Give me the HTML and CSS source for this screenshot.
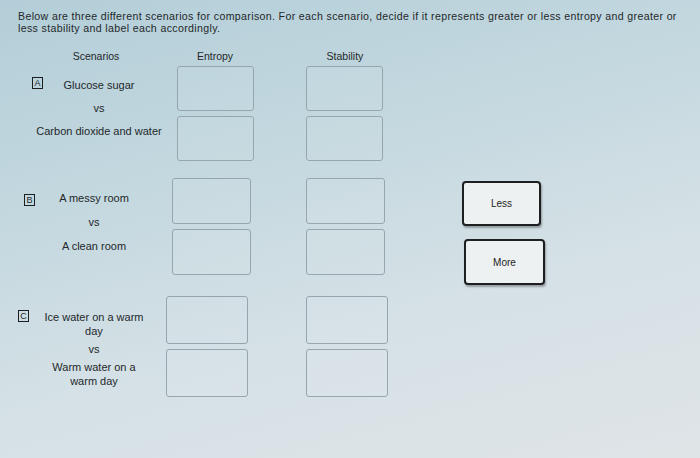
FILE: index.html
```html
<!DOCTYPE html>
<html lang="en">
<head>
    <meta charset="UTF-8">
    <meta name="viewport" content="width=device-width, initial-scale=1.0">
    <title>Entropy and Stability</title>
    <link rel="stylesheet" href="styles.css">
</head>
<body>

    <div class="sheet">
        <p class="intro">Below are three different scenarios for comparison. For each scenario, decide if it represents greater or less entropy and greater or less stability and label each accordingly.</p>

        <div class="board">
            <!-- Column headings -->
            <div class="row head-row">
                <div class="head head-scenario">Scenarios</div>
                <div class="head">Entropy</div>
                <div class="head">Stability</div>
                <div></div>
            </div>

            <!-- Scenario A -->
            <div class="row group group-a">
                <div class="scenario">
                    <span class="tag">A</span>
                    <div>Glucose sugar</div>
                    <div>vs</div>
                    <div>Carbon dioxide and water</div>
                </div>
                <div class="slots entropy"><div class="slot"></div><div class="slot"></div></div>
                <div class="slots"><div class="slot"></div><div class="slot"></div></div>
                <div></div>
            </div>

            <!-- Scenario B -->
            <div class="row group group-b">
                <div class="scenario">
                    <span class="tag">B</span>
                    <div>A messy room</div>
                    <div>vs</div>
                    <div>A clean room</div>
                </div>
                <div class="slots entropy"><div class="slot"></div><div class="slot"></div></div>
                <div class="slots"><div class="slot"></div><div class="slot"></div></div>
                <div class="options">
                    <button class="choice">Less</button>
                    <button class="choice choice-more">More</button>
                </div>
            </div>

            <!-- Scenario C -->
            <div class="row group group-c">
                <div class="scenario">
                    <span class="tag">C</span>
                    <div>Ice water on a warm<br>day</div>
                    <div>vs</div>
                    <div>Warm water on a<br>warm day</div>
                </div>
                <div class="slots entropy"><div class="slot"></div><div class="slot"></div></div>
                <div class="slots"><div class="slot"></div><div class="slot"></div></div>
                <div></div>
            </div>
        </div>
    </div>

</body>
</html>
```

FILE: styles.css
```css
html, body {
    height: 100%;
}
body {
    font-family: "Liberation Sans", Arial, sans-serif;
    margin: 0;
    color: #23282b;
    background: linear-gradient(165deg, #b3ced8 0%, #c4d8df 35%, #d5e1e6 65%, #dfe4e7 100%);
}
.sheet {
    padding: 10px 0 0 18px;
}
.intro {
    margin: 0;
    max-width: 680px;
    font-size: 10.6px;
    line-height: 12px;
    letter-spacing: 0.35px;
}
.board {
    display: flex;
    flex-direction: column;
    margin-top: 16px;
}
.row {
    display: grid;
    grid-template-columns: 158px 130px 155px 90px;
}
.head {
    width: 78px;
    text-align: center;
    font-size: 10.5px;
    line-height: 12px;
}
.head-scenario {
    width: 156px;
}
.head-row {
    margin-bottom: 4px;
}

/* each group drifts a little, like the photo */
.group {
    --shift: 0px;
    --slot-w: 77px;
    --slot-h: 45px;
}
.group-a {
    --shift: 1px;
}
.group-b {
    margin-top: 17px;
    --shift: -4px;
    --slot-w: 79px;
    --slot-h: 46px;
}
.group-c {
    margin-top: 11px;
    --shift: -10px;
    --slot-w: 82px;
    --slot-h: 48px;
}

.scenario {
    position: relative;
    width: 152px;
    display: flex;
    flex-direction: column;
    align-items: center;
    text-align: center;
    font-size: 11px;
    line-height: 12px;
    padding-top: 13px;
    gap: 11px;
}
.group-a .scenario {
    width: 162px;
}
.group-b .scenario {
    padding-top: 14px;
    gap: 12px;
}
.group-c .scenario {
    line-height: 14px;
    padding-top: 14px;
    gap: 4px;
}
.tag {
    position: absolute;
    left: 14px;
    top: 11px;
    width: 9px;
    height: 10px;
    border: 1px solid #1c1f21;
    font-size: 9px;
    line-height: 10px;
    text-align: center;
}
.group-b .tag {
    left: 6px;
    top: 16px;
}
.group-c .tag {
    left: 0;
    top: 14px;
}

.slots {
    display: flex;
    flex-direction: column;
    gap: 5px;
}
.slots.entropy {
    margin-left: var(--shift);
}
.slot {
    width: var(--slot-w);
    height: var(--slot-h);
    box-sizing: border-box;
    border: 1.5px solid #97a6ac;
    border-radius: 3px;
    background-color: rgba(255, 255, 255, 0.06);
}

.options {
    display: flex;
    flex-direction: column;
    align-items: flex-start;
    gap: 13px;
    padding-top: 3px;
    padding-left: 1px;
}
.choice {
    width: 79px;
    height: 45px;
    box-sizing: border-box;
    border: 2px solid #1d1f20;
    border-radius: 4px;
    background-color: #eef1f2;
    box-shadow: 1px 2px 2px rgba(0, 0, 0, 0.3);
    font-family: "Liberation Sans", Arial, sans-serif;
    font-size: 10px;
    color: #222;
    padding: 0;
}
.choice-more {
    width: 81px;
    height: 46px;
    margin-left: 2px;
}
```
